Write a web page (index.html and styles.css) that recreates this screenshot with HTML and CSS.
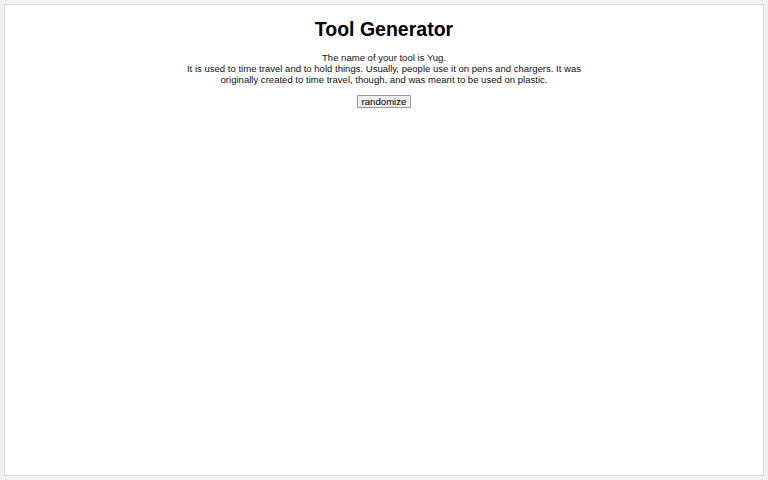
FILE: index.html
```html
<!DOCTYPE html>
<html lang="en">
<head>
    <meta charset="UTF-8" />
    <meta name="viewport" content="width=device-width, initial-scale=1" />
    <title>Tool Generator</title>
    <link rel="stylesheet" href="styles.css">
</head>
<body>
    <div class="frame">
        <h1>Tool Generator</h1>
        <p class="result">
            The name of your tool is Yug.<br>
            It is used to time travel and to hold things. Usually, people use it on pens and chargers. It was originally created to time travel, though, and was meant to be used on plastic.
        </p>
        <button type="button">randomize</button>
    </div>
</body>
</html>
```

FILE: styles.css
```css
html, body {
    height: 100%;
}
body {
    margin: 0;
    padding: 4px;
    box-sizing: border-box;
    background-color: #f1f1f1;
    font-family: "Liberation Sans", Arial, sans-serif;
}
.frame {
    height: 100%;
    box-sizing: border-box;
    background-color: #ffffff;
    border: 1px solid #d9d9d9;
    text-align: center;
    padding-top: 13px;
}
h1 {
    margin: 0 0 12px;
    font-size: 19.5px;
    line-height: 22px;
    color: #000;
}
.result {
    width: 400px;
    margin: 0 auto 6px;
    font-size: 9.55px;
    line-height: 11px;
    color: #111;
}
button {
    font-family: "Liberation Sans", Arial, sans-serif;
    font-size: 9.6px;
    line-height: 11px;
    padding: 0 4px;
    background-color: #efefef;
    border: 1px solid #999;
    border-radius: 1px;
    color: #000;
}
```
